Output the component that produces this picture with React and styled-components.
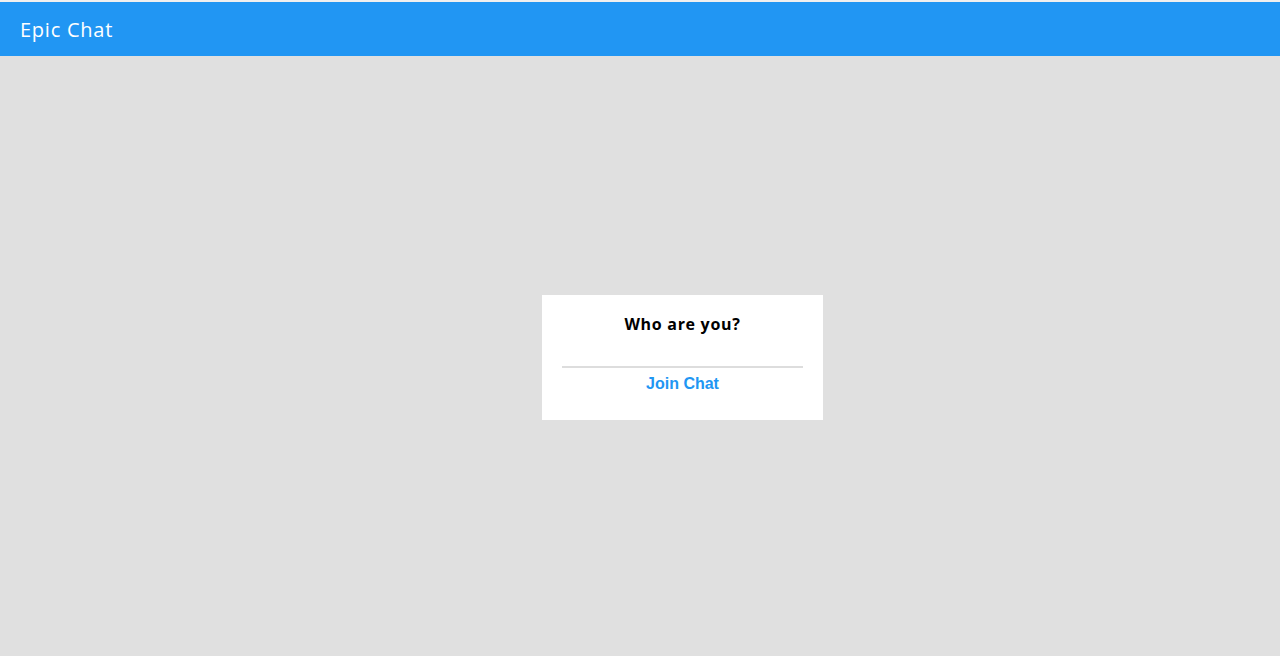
import React from "react";
import styled, { createGlobalStyle } from "styled-components";

const Global = createGlobalStyle`
  html, body { margin: 0; padding: 0; height: 100%; }
  body { background: #e0e0e0; font-family: "Open Sans", "Liberation Sans", sans-serif; }
  #root { height: 100%; }
`;

const Page = styled.div`
  height: 100vh;
  display: flex;
  flex-direction: column;
  border-top: 2px solid #efefef;
  box-sizing: border-box;
`;

const Header = styled.header`
  height: 54px;
  flex: none;
  background: #2196f3;
  display: flex;
  align-items: center;
  padding-left: 20px;
`;

const Brand = styled.h1`
  margin: 0;
  font-family: "Open Sans", sans-serif;
  font-weight: 400;
  font-size: 20px;
  letter-spacing: 0.75px;
  color: #ffffff;
`;

const Main = styled.main`
  flex: 1;
  display: flex;
  align-items: center;
  justify-content: center;
  padding-left: 85px;
  padding-top: 2px;
`;

const Card = styled.form`
  width: 281px;
  box-sizing: border-box;
  background: #ffffff;
  padding: 19px 20px 27px;
  display: flex;
  flex-direction: column;
  align-items: stretch;
`;

const Title = styled.h2`
  margin: 0;
  font-family: "Open Sans", sans-serif;
  font-weight: 700;
  font-size: 16px;
  line-height: 20px;
  letter-spacing: 0.7px;
  text-align: center;
  color: #000;
`;

const NameInput = styled.input`
  margin-top: 12px;
  height: 20px;
  border: none;
  border-bottom: 2px solid #dddddd;
  outline: none;
  padding: 0;
  font-size: 16px;
  background: transparent;
`;

const JoinButton = styled.button`
  margin-top: 7px;
  border: none;
  background: none;
  padding: 0;
  font-family: "Liberation Sans", Arial, sans-serif;
  font-weight: 700;
  font-size: 16px;
  line-height: 18px;
  color: #2196f3;
  cursor: pointer;
`;

export default function App() {
  return (
    <>
      <Global />
      <Page>
        <Header>
          <Brand>Epic Chat</Brand>
        </Header>
        <Main>
          <Card onSubmit={(e) => e.preventDefault()}>
            <Title>Who are you?</Title>
            <NameInput type="text" />
            <JoinButton type="submit">Join Chat</JoinButton>
          </Card>
        </Main>
      </Page>
    </>
  );
}
